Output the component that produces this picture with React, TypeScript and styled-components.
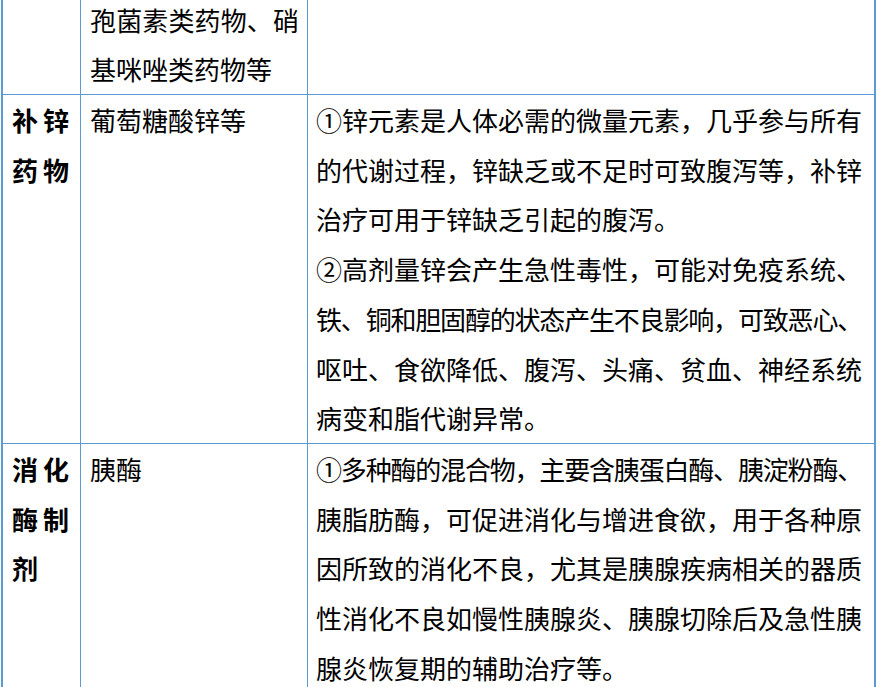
import { createGlobalStyle, styled } from "styled-components";

const GlobalStyle = createGlobalStyle`
    html, body {
        margin: 0;
        padding: 0;
        background: #ffffff;
        overflow: hidden;
    }
    body {
        font-family: "Noto Sans CJK SC", "Noto Sans", sans-serif;
        color: #000000;
    }
`;

const lineColor = "#5b9bd5";

const Table = styled.div`
    box-sizing: border-box;
    width: 875px;
    margin: -7.4px 0 0 1px;
    border-top: 2px solid ${lineColor};
    border-left: 2px solid ${lineColor};
    border-right: 2px solid ${lineColor};
`;

const Row = styled.div`
    display: grid;
    grid-template-columns: 78px 227px 1fr;
    border-bottom: 1px solid ${lineColor};
`;

const Cell = styled.div`
    box-sizing: border-box;
    font-size: 26px;
    line-height: 49.7px;
    border-right: 1px solid ${lineColor};
    &:last-child {
        border-right: none;
    }
`;

const CategoryCell = styled(Cell)`
    padding: 0 6px 0 9px;
    font-weight: 700;
    letter-spacing: 5px;
`;

const NameCell = styled(Cell)`
    padding: 0 8px 0 9px;
`;

const NoteCell = styled(Cell)`
    padding: 0 12px 0 8px;
`;

const Line = styled.div<{ $full?: boolean; $tight?: boolean }>`
    white-space: nowrap;
    text-align: ${(props) => (props.$full ? "justify" : "left")};
    text-align-last: ${(props) => (props.$full ? "justify" : "auto")};
    letter-spacing: ${(props) => (props.$tight ? "-1.2px" : "0")};
`;

interface DrugRow {
    category: string;
    name: string[];
    notes: string[][];
}

const rows: DrugRow[] = [
    {
        category: "",
        name: ["孢菌素类药物、硝", "基咪唑类药物等"],
        notes: [],
    },
    {
        category: "补锌药物",
        name: ["葡萄糖酸锌等"],
        notes: [
            [
                "①锌元素是人体必需的微量元素，几乎参与所有",
                "的代谢过程，锌缺乏或不足时可致腹泻等，补锌",
                "治疗可用于锌缺乏引起的腹泻。",
            ],
            [
                "②高剂量锌会产生急性毒性，可能对免疫系统、",
                "铁、铜和胆固醇的状态产生不良影响，可致恶心、",
                "呕吐、食欲降低、腹泻、头痛、贫血、神经系统",
                "病变和脂代谢异常。",
            ],
        ],
    },
    {
        category: "消化酶制剂",
        name: ["胰酶"],
        notes: [
            [
                "①多种酶的混合物，主要含胰蛋白酶、胰淀粉酶、",
                "胰脂肪酶，可促进消化与增进食欲，用于各种原",
                "因所致的消化不良，尤其是胰腺疾病相关的器质",
                "性消化不良如慢性胰腺炎、胰腺切除后及急性胰",
                "腺炎恢复期的辅助治疗等。",
            ],
        ],
    },
];

const renderLines = (lines: string[], key: string) =>
    lines.map((text, i) => {
        const isLast = i === lines.length - 1;
        return (
            <Line
                key={`${key}-${i}`}
                $full={!isLast}
                $tight={[...text].length > 21}
            >
                {text}
            </Line>
        );
    });

export default function App() {
    return (
        <>
            <GlobalStyle />
            <Table>
                {rows.map((row, r) => (
                    <Row key={r}>
                        <CategoryCell>{row.category}</CategoryCell>
                        <NameCell>{renderLines(row.name, `n${r}`)}</NameCell>
                        <NoteCell>
                            {row.notes.map((para, p) =>
                                renderLines(para, `p${r}-${p}`)
                            )}
                        </NoteCell>
                    </Row>
                ))}
            </Table>
        </>
    );
}
